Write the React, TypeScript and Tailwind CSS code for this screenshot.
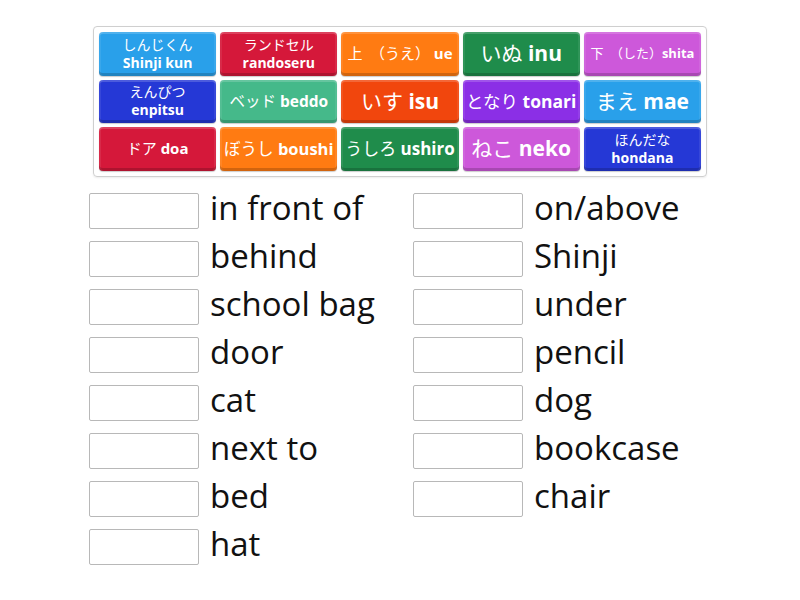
import React from "react";

type Tile = {
  bg: string;
  jp: string;
  ro: string;
  two?: boolean;
  size?: string;
};

const tiles: Tile[] = [
  { bg: "bg-[#29a0ea]", jp: "しんじくん", ro: "Shinji kun", two: true },
  { bg: "bg-[#d5183a]", jp: "ランドセル", ro: "randoseru", two: true },
  { bg: "bg-[#ff7b12]", jp: "上　（うえ） ", ro: "ue", size: "text-[15px]" },
  { bg: "bg-[#1f8c4b]", jp: "いぬ ", ro: "inu", size: "text-[21px]" },
  { bg: "bg-[#cd58da]", jp: "下　（した）", ro: "shita", size: "text-[13px]" },
  { bg: "bg-[#2538d6]", jp: "えんぴつ", ro: "enpitsu", two: true },
  { bg: "bg-[#45b98a]", jp: "ベッド ", ro: "beddo", size: "text-[15.5px]" },
  { bg: "bg-[#f1460d]", jp: "いす ", ro: "isu", size: "text-[21px]" },
  { bg: "bg-[#8b2fe6]", jp: "となり ", ro: "tonari", size: "text-[17.5px]" },
  { bg: "bg-[#29a0ea]", jp: "まえ ", ro: "mae", size: "text-[21px]" },
  { bg: "bg-[#d5183a]", jp: "ドア ", ro: "doa", size: "text-[15px]" },
  { bg: "bg-[#ff7b12]", jp: "ぼうし ", ro: "boushi", size: "text-[16.5px]" },
  { bg: "bg-[#1f8c4b]", jp: "うしろ ", ro: "ushiro", size: "text-[17px]" },
  { bg: "bg-[#cd58da]", jp: "ねこ ", ro: "neko", size: "text-[21px]" },
  { bg: "bg-[#2538d6]", jp: "ほんだな", ro: "hondana", two: true },
];

const left = ["in front of", "behind", "school bag", "door", "cat", "next to", "bed", "hat"];
const right = ["on/above", "Shinji", "under", "pencil", "dog", "bookcase", "chair"];

function TileBox({ t }: { t: Tile }) {
  return (
    <div
      className={`${t.bg} h-[43.5px] rounded-[4px] flex flex-col items-center justify-center text-white overflow-hidden whitespace-nowrap shadow-[inset_0_-3px_0_rgba(0,0,0,0.18),inset_0_2px_0_rgba(255,255,255,0.18),inset_2px_0_0_rgba(255,255,255,0.08),inset_-2px_0_0_rgba(255,255,255,0.08),0_1px_1px_rgba(0,0,0,0.2)]`}
    >
      {t.two ? (
        <>
          <div className="text-[14px] leading-[18px] font-normal">{t.jp}</div>
          <div className="text-[14px] leading-[18px] font-bold">{t.ro}</div>
        </>
      ) : (
        <div className={`${t.size} leading-none`}>
          <span className="font-normal">{t.jp}</span>
          <span className="font-bold">{t.ro}</span>
        </div>
      )}
    </div>
  );
}

function Row({ label }: { label: string }) {
  return (
    <div className="flex items-center h-[36px] mb-[12px]">
      <div className="w-[110px] h-[36px] border border-[#b8b8b8] rounded-[2px] bg-white shrink-0" />
      <div className="ml-[11px] pb-[6px] text-[33px] leading-none text-[#111] whitespace-nowrap">{label}</div>
    </div>
  );
}

export default function App() {
  return (
    <div
      className="w-[800px] h-[600px] bg-white pt-[26px]"
      style={{ fontFamily: '"Open Sans", "Noto Sans CJK JP", sans-serif' }}
    >
      <div className="mx-auto w-[614px] border border-[#cfcfcf] rounded-[4px] p-[5px] shadow-[0_1px_2px_rgba(0,0,0,0.08)]">
        <div className="grid grid-cols-5 gap-[4px]">
          {tiles.map((t, i) => (
            <TileBox key={i} t={t} />
          ))}
        </div>
      </div>
      <div className="flex mt-[16px] ml-[89px]">
        <div className="w-[324px]">
          {left.map((l) => (
            <Row key={l} label={l} />
          ))}
        </div>
        <div>
          {right.map((l) => (
            <Row key={l} label={l} />
          ))}
        </div>
      </div>
    </div>
  );
}
